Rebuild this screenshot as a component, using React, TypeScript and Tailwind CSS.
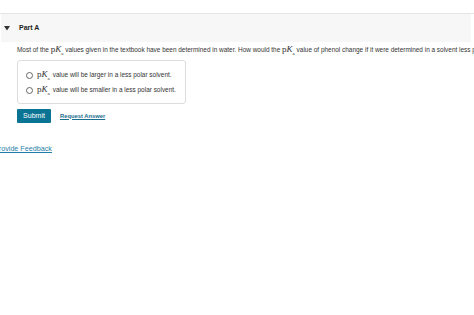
import React from "react";

const PKa = () => (
  <span className="font-['Liberation_Serif',serif] text-[9px] text-[#333]">
    p<i>K</i>
    <sub className="text-[5px] align-[-1px]">a</sub>
  </span>
);

const Option = ({ children }: { children: React.ReactNode }) => (
  <label className="flex items-center gap-[4px] h-[15px]">
    <span className="w-[7px] h-[7px] rounded-full border border-[#666] bg-white" />
    <span className="flex items-baseline gap-[3px]">
      <PKa />
      <span>{children}</span>
    </span>
  </label>
);

export default function App() {
  return (
    <div className="w-[474px] h-[315px] bg-white overflow-hidden font-['Liberation_Sans',Arial,sans-serif] text-[#333] text-[6.45px]">
      <div className="mt-[13px] border-t border-[#e5e5e5]">
        <div className="mr-[3px] ml-[1px] h-[28px] bg-[#f7f7f7] flex items-center">
          <svg width="6" height="5" viewBox="0 0 6 5" className="ml-[3px]">
            <path d="M0 0 L6 0 L3 4.5 Z" fill="#333" />
          </svg>
          <span className="ml-[9px] font-bold text-[7px] text-[#222]">Part A</span>
        </div>
      </div>
      <div className="pl-[17px] whitespace-nowrap">
        <p className="mt-[1px] h-[14px] flex items-center">
          Most of the&nbsp;<PKa />&nbsp;values given in the textbook have been determined in water. How would the&nbsp;<PKa />&nbsp;value of phenol change if it were determined in a solvent less polar than water?
        </p>
        <div className="mt-[3px] w-[169px] h-[44px] border border-[#ddd] rounded-[3px] flex flex-col justify-center pl-[8px] pt-[1px]">
          <Option>value will be larger in a less polar solvent.</Option>
          <Option>value will be smaller in a less polar solvent.</Option>
        </div>
        <div className="mt-[5px] flex items-center gap-[9px]">
          <button className="w-[34px] h-[14px] bg-[#0b7494] text-white text-[7px] rounded-[1px]">Submit</button>
          <a className="text-[#1a6e8e] font-bold underline text-[5.8px]">Request Answer</a>
        </div>
      </div>
      <div className="mt-[21px] -ml-[6px]">
        <a className="text-[#1f7fa8] underline text-[7.2px]">Provide Feedback</a>
      </div>
    </div>
  );
}
